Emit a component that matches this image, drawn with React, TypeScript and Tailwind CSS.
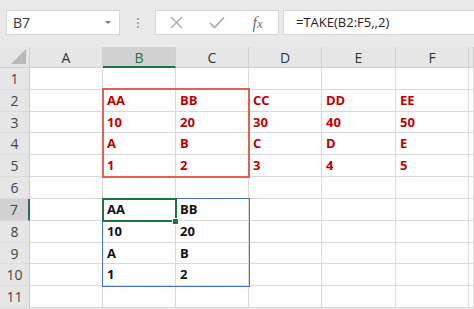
import React from 'react';

const cols = ['A', 'B', 'C', 'D', 'E', 'F', ''];
const rows = [1, 2, 3, 4, 5, 6, 7, 8, 9, 10, 11];

const redData: Record<number, string[]> = {
  2: ['AA', 'BB', 'CC', 'DD', 'EE'],
  3: ['10', '20', '30', '40', '50'],
  4: ['A', 'B', 'C', 'D', 'E'],
  5: ['1', '2', '3', '4', '5'],
};

const blackData: Record<number, string[]> = {
  7: ['AA', 'BB'],
  8: ['10', '20'],
  9: ['A', 'B'],
  10: ['1', '2'],
};

const cellValue = (row: number, colIdx: number) => {
  // colIdx 0 = A
  if (redData[row] && colIdx >= 1 && colIdx <= 5) {
    return { text: redData[row][colIdx - 1], red: true };
  }
  if (blackData[row] && colIdx >= 1 && colIdx <= 2) {
    return { text: blackData[row][colIdx - 1], red: false };
  }
  return null;
};

const Toolbar: React.FC = () => (
  <div className="flex h-[47px] items-start bg-[#e9e9e9] pl-[6px] pt-[10px]">
    <div className="flex h-[25px] w-[114px] items-center justify-between border border-[#d6d6d6] bg-white pl-[6px] pr-[8px]">
      <span className="text-[14px] text-[#333]">B7</span>
      <span className="h-0 w-0 border-x-[3px] border-t-[3px] border-x-transparent border-t-[#7a7a7a]" />
    </div>
    <div className="flex h-[25px] w-[35px] flex-col items-center justify-center gap-[2px] pl-[1px]">
      <span className="h-[2px] w-[2px] bg-[#a8a8a8]" />
      <span className="h-[2px] w-[2px] bg-[#a8a8a8]" />
      <span className="h-[2px] w-[2px] bg-[#a8a8a8]" />
    </div>
    <div className="flex h-[25px] w-[124px] items-center border border-[#d6d6d6] bg-white">
      <div className="flex w-[41px] justify-center">
        <svg width="13" height="13" viewBox="0 0 13 13">
          <path d="M1 1 L12 12 M12 1 L1 12" stroke="#a8a8a8" strokeWidth="1.3" fill="none" />
        </svg>
      </div>
      <div className="flex w-[41px] justify-center">
        <svg width="16" height="13" viewBox="0 0 16 13">
          <path d="M1 7 L5.5 11.5 L15 1.5" stroke="#a8a8a8" strokeWidth="1.6" fill="none" />
        </svg>
      </div>
      <div className="flex w-[41px] justify-center">
        <span className="font-['Liberation_Serif',serif] text-[16px] italic leading-none text-[#707070]">
          f<span className="text-[13px]">x</span>
        </span>
      </div>
    </div>
    <div className="ml-[4px] flex h-[25px] flex-1 items-center border border-r-0 border-[#d6d6d6] bg-white pl-[12px]">
      <span className="text-[13px] text-[#222]">=TAKE(B2:F5,,2)</span>
    </div>
  </div>
);

const Sheet: React.FC = () => (
  <div className="relative">
    <div className="grid grid-cols-[30px_73px_73px_73px_73px_74px_73px_1fr] grid-rows-[21px_22px_22px_21px_22px_22px_22px_22px_22px_21px_22px_22px]">
      {/* corner */}
      <div className="flex items-end justify-end border-b border-r border-[#cfcfcf] bg-[#e6e6e6] pb-[3px] pr-[3px]">
        <span className="h-0 w-0 border-b-[15px] border-l-[15px] border-b-[#b9b9b9] border-l-transparent" />
      </div>
      {cols.map((c, i) => (
        <div
          key={i}
          className={
            c === 'B'
              ? 'flex items-center justify-center border-b-2 border-r border-b-[#217346] border-r-[#cfcfcf] bg-[#d2d2d2] pt-[1px] text-[14px] text-[#1f6b44]'
              : 'flex items-center justify-center border-b border-r border-[#cfcfcf] bg-[#e6e6e6] text-[14px] text-[#333]'
          }
        >
          {c}
        </div>
      ))}
      {rows.map((r) => (
        <React.Fragment key={r}>
          <div
            className={
              r === 7
                ? 'flex items-center justify-center border-b border-r-2 border-b-[#d4d4d4] border-r-[#217346] bg-[#d2d2d2] text-[14px] text-[#444]'
                : 'flex items-center justify-center border-b border-r border-b-[#dcdcdc] border-r-[#c8c8c8] bg-[#e6e6e6] text-[14px] text-[#444]'
            }
          >
            {r}
          </div>
          {cols.map((c, i) => {
            const v = cellValue(r, i);
            return (
              <div
                key={i}
                className="flex items-center border-b border-r border-[#dadada] bg-white pl-[4px] pt-[1px]"
              >
                {v && (
                  <span
                    className={
                      v.red
                        ? 'text-[13px] font-bold text-[#c00000]'
                        : 'text-[13px] font-bold text-[#111]'
                    }
                  >
                    {v.text}
                  </span>
                )}
              </div>
            );
          })}
        </React.Fragment>
      ))}
    </div>

    {/* red annotation box round B2:C5 */}
    <div className="pointer-events-none absolute left-[102px] top-[41px] h-[90px] w-[148px] border-2 border-[#ea5d56]" />
    {/* spill range outline */}
    <div className="pointer-events-none absolute left-[102px] top-[151px] h-[89px] w-[148px] border border-[#4472c4]" />
    {/* active cell B7 */}
    <div className="pointer-events-none absolute left-[102px] top-[151px] h-[24px] w-[75px] border-2 border-[#217346]" />
    <div className="pointer-events-none absolute left-[172px] top-[171px] h-[7px] w-[7px] border border-white bg-[#217346]" />
  </div>
);

const App: React.FC = () => {
  return (
    <div className="h-[309px] w-[474px] overflow-hidden bg-[#e9e9e9] font-['Open_Sans',sans-serif]">
      <Toolbar />
      <Sheet />
    </div>
  );
};

export default App;
